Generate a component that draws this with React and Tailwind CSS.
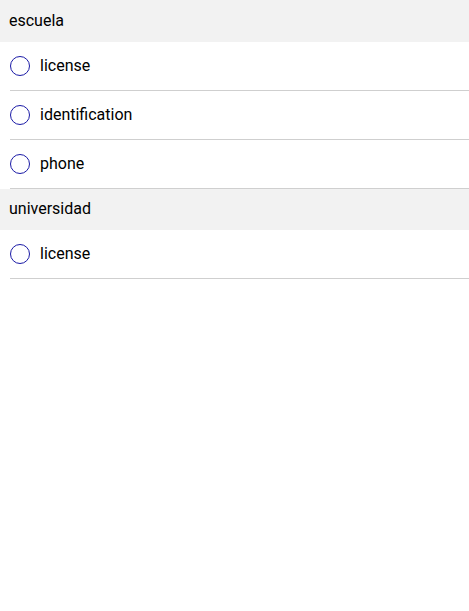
const groups = [
  { name: 'escuela', items: ['license', 'identification', 'phone'] },
  { name: 'universidad', items: ['license'] },
]

function Radio() {
  return (
    <span className="w-5 h-5 rounded-full border border-[#1a1aa6] shrink-0" />
  )
}

export default function App() {
  return (
    <div className="min-h-[611px] bg-white text-black" style={{ fontFamily: 'Roboto, "Liberation Sans", sans-serif' }}>
      {groups.map(g => (
        <div key={g.name}>
          <div className="h-[41.5px] bg-[#f2f2f2] flex items-center px-[9px] text-[16px]">{g.name}</div>
          {g.items.map((it, i) => (
            <div key={i} className="ml-[10px] h-[49px] border-b border-[#cfcfcf] flex items-center gap-[10px]">
              <Radio />
              <span className="text-[16px]">{it}</span>
            </div>
          ))}
        </div>
      ))}
    </div>
  )
}
